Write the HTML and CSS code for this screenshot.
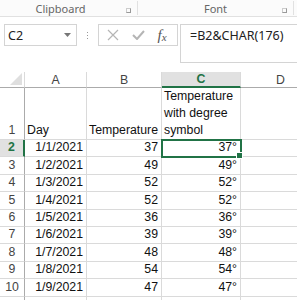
FILE: index.html
```html
<!DOCTYPE html>
<html>
<head>
    <meta name="viewport" content="width=device-width, initial-scale=1">
    <title>Temperature with degree symbol</title>
    <link rel="stylesheet" href="styles.css">
</head>
<body>
    <div class="ribbon">
        <div class="group group-clipboard">
            <span class="group-label">Clipboard</span>
            <span class="launcher"></span>
        </div>
        <div class="group group-font">
            <span class="group-label">Font</span>
            <span class="launcher"></span>
        </div>
    </div>

    <div class="formula-row">
        <div class="name-box">
            <span>C2</span>
            <svg width="7" height="4" viewBox="0 0 7 4"><path d="M0 0h7L3.5 4z" fill="#777"/></svg>
        </div>
        <div class="grip"><i></i><i></i><i></i></div>
        <div class="fx-box">
            <svg width="12" height="12" viewBox="0 0 12 12"><path d="M1 1l10 10M11 1L1 11" stroke="#b5b5b5" stroke-width="1.2" fill="none"/></svg>
            <svg width="13" height="10" viewBox="0 0 13 10"><path d="M1 5l4 4 7-8" stroke="#b5b5b5" stroke-width="2" fill="none"/></svg>
            <span class="fx">f<sub>x</sub></span>
        </div>
        <div class="formula">=B2&amp;CHAR(176)</div>
    </div>

    <div class="sheet">
        <div class="corner"><span class="tri"></span></div>
        <div class="col-head">A</div>
        <div class="col-head">B</div>
        <div class="col-head active">C</div>
        <div class="col-head">D</div>

        <div class="row-head">1</div>
        <div class="cell">Day</div>
        <div class="cell">Temperature</div>
        <div class="cell wrap">Temperature with degree symbol</div>
        <div class="cell"></div>
    </div>

    <script>
        // data rows for the sheet (last one is the cut-off row 11)
        const rows = [
            ['1/1/2021', 37], ['1/2/2021', 49], ['1/3/2021', 52],
            ['1/4/2021', 52], ['1/5/2021', 36], ['1/6/2021', 39],
            ['1/7/2021', 48], ['1/8/2021', 54], ['1/9/2021', 47],
            null
        ];
        const sheet = document.querySelector('.sheet');

        rows.forEach((r, i) => {
            const num = i + 2;
            if (!r) {
                sheet.insertAdjacentHTML('beforeend',
                    '<div class="row-head"></div><div class="cell"></div><div class="cell"></div><div class="cell"></div><div class="cell"></div>');
                return;
            }
            const html =
                `<div class="row-head${num === 2 ? ' active' : ''}">${num}</div>` +
                `<div class="cell num">${r[0]}</div>` +
                `<div class="cell num">${r[1]}</div>` +
                `<div class="cell num${num === 2 ? ' selected' : ''}">${r[1]}°</div>` +
                `<div class="cell"></div>`;
            sheet.insertAdjacentHTML('beforeend', html);
        });
    </script>
</body>
</html>
```

FILE: styles.css
```css
body {
    margin: 0;
    padding: 0;
    width: 297px;
    height: 300px;
    overflow: hidden;
    background: #fff;
    font-family: "Liberation Sans", Arial, sans-serif;
}

/* ribbon strip */
.ribbon {
    height: 16px;
    display: flex;
    border-bottom: 1px solid #e1e1e1;
    background: #fbfbfb;
}

.group {
    position: relative;
    display: flex;
    justify-content: center;
    align-items: center;
    border-right: 1px solid #e1e1e1;
    box-sizing: border-box;
    height: 14px;
    margin-top: 1px;
}

.group-clipboard {
    width: 138px;
    padding-right: 16px;
}

.group-font {
    width: 156px;
}

.group-label {
    font-family: "Noto Sans", sans-serif;
    font-size: 11px;
    color: #666;
    margin-top: 1px;
}

.launcher {
    position: absolute;
    right: 6px;
    top: 7px;
    width: 5px;
    height: 5px;
    border-right: 1px solid #999;
    border-bottom: 1px solid #999;
    border-top: 1px solid #ccc;
    border-left: 1px solid #ccc;
    box-sizing: border-box;
}

/* name box and formula bar */
.formula-row {
    display: flex;
    align-items: flex-start;
    padding: 7px 0 0 4px;
    height: 55px;
    box-sizing: border-box;
    font-family: "Noto Sans", sans-serif;
}

.name-box {
    width: 73px;
    height: 22px;
    border: 1px solid #d4d4d4;
    box-sizing: border-box;
    display: flex;
    align-items: center;
    justify-content: space-between;
    padding: 0 5px 0 3px;
    font-size: 12.5px;
    color: #222;
}

.grip {
    width: 21px;
    height: 22px;
    display: flex;
    flex-direction: column;
    align-items: center;
    justify-content: center;
    gap: 2px;
}

.grip i {
    width: 1px;
    height: 1px;
    background: #999;
}

.fx-box {
    width: 80px;
    height: 22px;
    border: 1px solid #d4d4d4;
    box-sizing: border-box;
    display: flex;
    align-items: center;
    justify-content: space-around;
    padding: 0 4px 0 2px;
}

.fx {
    font-family: "Liberation Serif", serif;
    font-style: italic;
    font-size: 15px;
    color: #555;
}

.fx sub {
    font-size: 11px;
    vertical-align: -1px;
}

.formula {
    flex: 1;
    margin-left: 2px;
    height: 39px;
    border: 1px solid #d4d4d4;
    border-right: none;
    box-sizing: border-box;
    padding: 2px 0 0 9px;
    font-size: 12.5px;
    color: #222;
}

/* worksheet grid */
.sheet {
    display: grid;
    grid-template-columns: 25px 62px 75px 79px 80px;
    grid-template-rows: 16px 52px;
    grid-auto-rows: 17.4px;
    font-size: 12.3px;
}

.corner,
.col-head {
    background: #fff;
    border-right: 1px solid #dadada;
    border-bottom: 1px solid #ababab;
    box-sizing: border-box;
}

.corner {
    position: relative;
}

.tri {
    position: absolute;
    right: 2px;
    bottom: 2px;
    width: 0;
    height: 0;
    border-left: 12px solid transparent;
    border-bottom: 12px solid #dfdfdf;
}

.col-head {
    display: flex;
    justify-content: center;
    align-items: center;
    color: #444;
}

.col-head.active {
    background: #e1e1e1;
    color: #217346;
    font-weight: bold;
    border-bottom: 2px solid #217346;
}

.row-head {
    border-right: 1px solid #ababab;
    border-bottom: 1px solid #dadada;
    box-sizing: border-box;
    display: flex;
    align-items: flex-end;
    justify-content: center;
    line-height: 17px;
    color: #444;
}

.row-head.active {
    background: #e1e1e1;
    color: #217346;
    font-weight: bold;
    border-right: 2px solid #217346;
}

.cell {
    border-right: 1px solid #dadada;
    border-bottom: 1px solid #dadada;
    box-sizing: border-box;
    display: flex;
    align-items: flex-end;
    padding: 0 2px;
    line-height: 17px;
    color: #111;
    white-space: nowrap;
    overflow: hidden;
}

.cell.wrap {
    white-space: normal;
}

.cell.num {
    justify-content: flex-end;
    padding-right: 3px;
}

.cell.selected {
    position: relative;
    overflow: visible;
    outline: 2px solid #217346;
    outline-offset: -1px;
}

.cell.selected::after {
    content: "";
    position: absolute;
    right: -3px;
    bottom: -3px;
    width: 5px;
    height: 5px;
    background: #217346;
    border: 1px solid #fff;
}
```
